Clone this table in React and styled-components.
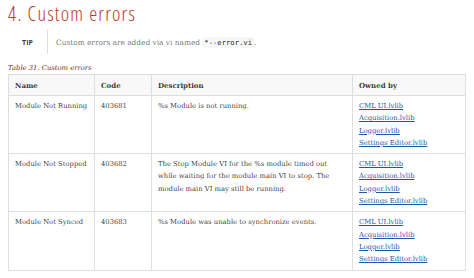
import React from "react";
import styled, { createGlobalStyle } from "styled-components";

const GlobalStyle = createGlobalStyle`
  html, body {
    margin: 0;
    padding: 0;
    background: #ffffff;
  }
  body {
    font-family: "DejaVu Serif", "Liberation Serif", serif;
    color: rgba(0, 0, 0, 0.8);
  }
`;

const Page = styled.div`
  padding: 0 9px 0 8px;
  width: 457px;
`;

const Heading = styled.h2`
  margin: 0;
  padding-top: 1px;
  font-family: "Open Sans", "DejaVu Sans", sans-serif;
  font-weight: 300;
  font-stretch: 75%;
  font-size: 20px;
  letter-spacing: 1.25px;
  line-height: 26px;
  color: #ba3925;
`;

const Admonition = styled.div`
  display: flex;
  align-items: center;
  margin-top: 3px;
  height: 24px;
`;

const AdmonitionLabel = styled.div`
  width: 39px;
  font-family: "Open Sans", "DejaVu Sans", sans-serif;
  font-weight: 700;
  font-size: 7px;
  color: rgba(0, 0, 0, 0.8);
  align-self: stretch;
  display: flex;
  align-items: center;
  justify-content: center;
  border-right: 1px solid #dddddf;
`;

const AdmonitionText = styled.div`
  padding-left: 8px;
  font-size: 7.4px;
  color: rgba(0, 0, 0, 0.6);
`;

const Code = styled.code`
  font-family: "DejaVu Sans Mono", "Liberation Mono", monospace;
  font-size: 7.2px;
  color: rgba(0, 0, 0, 0.9);
  background: #f7f7f8;
  padding: 1px 2px;
  border-radius: 2px;
`;

const Table = styled.table`
  border-collapse: collapse;
  table-layout: fixed;
  width: 457px;
  border: 1px solid #dedede;
  font-size: 6.8px;
`;

const Caption = styled.caption`
  text-align: left;
  font-style: italic;
  font-size: 6.8px;
  color: #7a2518;
  padding: 10px 0 2px;
`;

const HeadCell = styled.th`
  text-align: left;
  font-weight: 700;
  font-size: 7px;
  background: #f7f8f7;
  padding: 0 6px;
  height: 20px;
  border: 1px solid #dedede;
  color: rgba(0, 0, 0, 0.8);
`;

const Cell = styled.td`
  vertical-align: top;
  padding: 4px 5px 4px 6px;
  line-height: 12.3px;
  height: 48px;
  border: 1px solid #dedede;
  color: rgba(0, 0, 0, 0.8);
  white-space: ${({ $nowrap }) => ($nowrap ? "nowrap" : "normal")};
`;

const LinkList = styled.div`
  display: flex;
  flex-direction: column;
`;

const Link = styled.a`
  color: #2156a5;
  text-decoration: underline;
`;

const libs = ["CML UI.lvlib", "Acquisition.lvlib", "Logger.lvlib", "Settings Editor.lvlib"];

const errors = [
  { name: "Module Not Running", code: "403681", description: "%s Module is not running." },
  {
    name: "Module Not Stopped",
    code: "403682",
    description:
      "The Stop Module VI for the %s module timed out while waiting for the module main VI to stop. The module main VI may still be running.",
  },
  { name: "Module Not Synced", code: "403683", description: "%s Module was unable to synchronize events." },
];

export default function App() {
  return (
    <Page>
      <GlobalStyle />
      <Heading>4. Custom errors</Heading>
      <Admonition>
        <AdmonitionLabel>TIP</AdmonitionLabel>
        <AdmonitionText>
          Custom errors are added via vi named <Code>*--error.vi</Code>.
        </AdmonitionText>
      </Admonition>
      <Table>
        <Caption>Table 31. Custom errors</Caption>
        <colgroup>
          <col style={{ width: 86 }} />
          <col style={{ width: 57 }} />
          <col style={{ width: 201 }} />
          <col style={{ width: 113 }} />
        </colgroup>
        <thead>
          <tr>
            <HeadCell>Name</HeadCell>
            <HeadCell>Code</HeadCell>
            <HeadCell>Description</HeadCell>
            <HeadCell>Owned by</HeadCell>
          </tr>
        </thead>
        <tbody>
          {errors.map((e) => (
            <tr key={e.code}>
              <Cell $nowrap>{e.name}</Cell>
              <Cell>{e.code}</Cell>
              <Cell>{e.description}</Cell>
              <Cell>
                <LinkList>
                  {libs.map((l) => (
                    <Link key={l} href="#">
                      {l}
                    </Link>
                  ))}
                </LinkList>
              </Cell>
            </tr>
          ))}
        </tbody>
      </Table>
    </Page>
  );
}
